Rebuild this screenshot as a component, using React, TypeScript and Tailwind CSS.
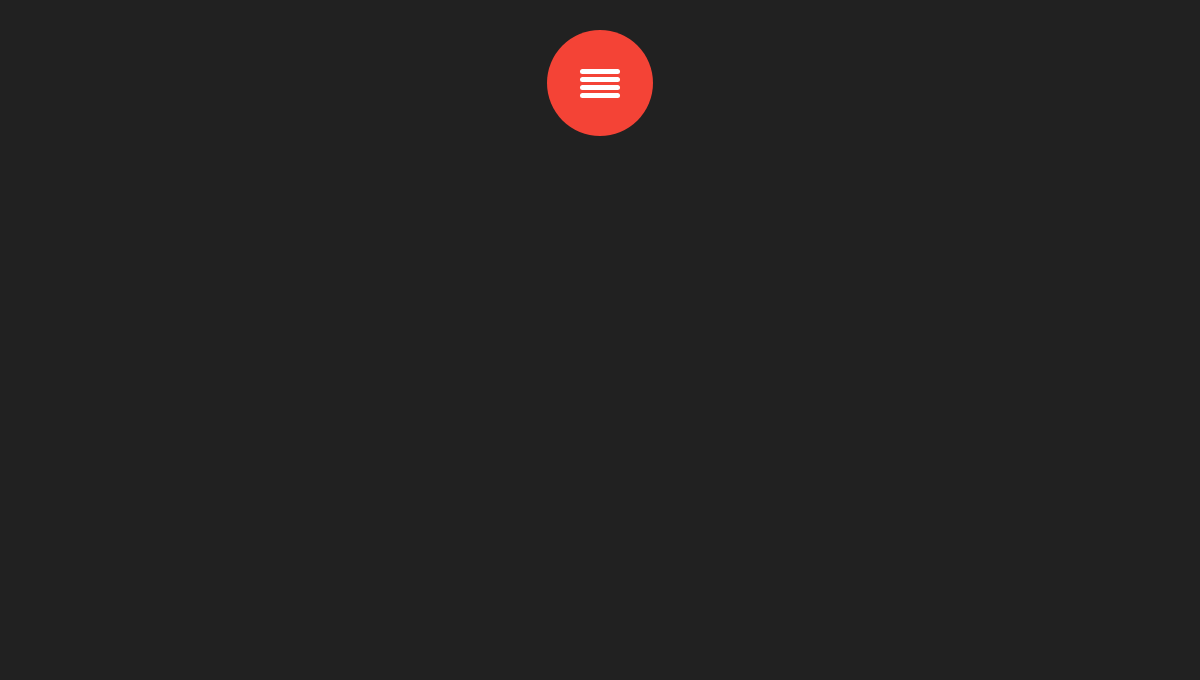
export default function App() {
  return (
    <div className="flex h-[680px] w-full justify-center bg-[#212121] pt-[30px]">
      <button
        type="button"
        aria-label="Menu"
        className="flex h-[106px] w-[106px] items-center justify-center rounded-full bg-[#f44336]"
      >
        <span className="flex w-10 flex-col gap-[3px]">
          <span className="h-[5px] w-full rounded-full bg-white" />
          <span className="h-[5px] w-full rounded-full bg-white" />
          <span className="h-[5px] w-full rounded-full bg-white" />
          <span className="h-[5px] w-full rounded-full bg-white" />
        </span>
      </button>
    </div>
  );
}
